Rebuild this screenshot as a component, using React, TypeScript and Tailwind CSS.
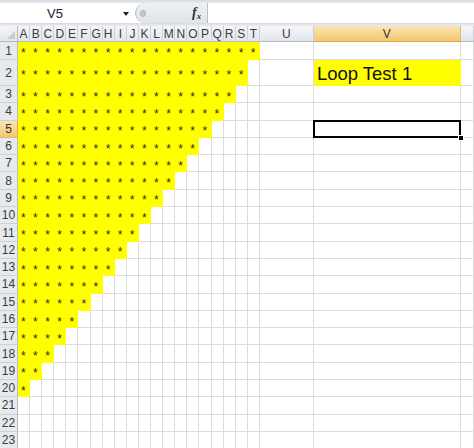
import React from "react";

const COLS = "ABCDEFGHIJKLMNOPQRST".split("");

function HeaderCell({ label, selected }: { label: string; selected?: boolean }) {
  return (
    <div
      className={
        selected
          ? "flex items-center justify-center border-r border-b border-r-[#e8b96a] border-b-[#e3a54b] bg-gradient-to-b from-[#fbe4b4] to-[#f4c76e] text-[12px] leading-none text-[#333]"
          : "flex items-center justify-center border-r border-b border-r-[#cdd1d7] border-b-[#b4bac2] bg-gradient-to-b from-[#f4f6f9] to-[#e2e6eb] text-[12px] leading-none text-[#3c3c3c]"
      }
    >
      {label}
    </div>
  );
}

function RowHeader({ n, selected }: { n: number; selected?: boolean }) {
  return (
    <div
      className={
        selected
          ? "flex items-center justify-center border-r border-b border-r-[#e3a54b] border-b-[#e8b96a] bg-gradient-to-b from-[#fbe4b4] to-[#f4c76e] text-[12px] leading-none text-[#333]"
          : "flex items-center justify-center border-r border-b border-r-[#b4bac2] border-b-[#cdd1d7] bg-[#e6e9ee] text-[12px] leading-none text-[#3c3c3c]"
      }
    >
      {n}
    </div>
  );
}

export default function App() {
  const rows = Array.from({ length: 23 }, (_, i) => i + 1);
  return (
    <div
      className="w-[474px] h-[448px] overflow-hidden bg-white"
      style={{ fontFamily: '"Liberation Sans", Arial, sans-serif' }}
    >
      {/* formula bar */}
      <div className="h-[26px] flex flex-col">
        <div className="h-[3px] bg-gradient-to-b from-[#d5dae1] to-[#e8ebef]" />
        <div className="flex h-[20px]">
          <div className="w-[135px] bg-white flex items-center relative">
            <span className="ml-[47px] text-[13px] text-[#222] leading-none">V5</span>
            <span className="absolute left-[123px] top-[9px] w-0 h-0 border-l-[3px] border-r-[3px] border-t-[4px] border-l-transparent border-r-transparent border-t-[#222]" />
          </div>
          <div className="w-[72px] bg-gradient-to-b from-[#eef0f3] to-[#e1e4e9] flex items-center relative rounded-l-[10px] border-l border-[#b3bac4]">
            <span className="ml-[4px] w-[6px] h-[7px] rounded-full bg-[#c3c8cf] border border-[#aeb4bc]" />
            <span
              className="absolute left-[56px] top-[3px] text-[14px] leading-none text-[#333] italic font-bold"
              style={{ fontFamily: '"Liberation Serif", "Times New Roman", serif' }}
            >
              f<sub className="text-[9px]">x</sub>
            </span>
          </div>
          <div className="flex-1 bg-white border-l border-[#b8bfc8]" />
        </div>
        <div className="h-[3px] bg-gradient-to-b from-[#d5dae0] to-[#eceef1]" />
      </div>

      {/* grid */}
      <div className="grid grid-cols-[18px_repeat(20,12.1px)_54px_147px_13px] grid-rows-[16px_18px_26px_repeat(21,17.3px)]">
        {/* header row */}
        <div className="relative border-r border-b border-r-[#b4bac2] border-b-[#b4bac2] bg-gradient-to-b from-[#f4f6f9] to-[#e2e6eb]">
          <span className="absolute right-[2px] bottom-[2px] w-0 h-0 border-b-[8px] border-l-[8px] border-b-[#c8cdd4] border-l-transparent" />
        </div>
        {COLS.map((c) => (
          <HeaderCell key={c} label={c} />
        ))}
        <HeaderCell label="U" />
        <HeaderCell label="V" selected />
        <HeaderCell label="" />

        {rows.map((r) => {
          const filled = 21 - r;
          return (
            <React.Fragment key={r}>
              <RowHeader n={r} selected={r === 5} />
              {COLS.map((c, ci) => {
                const yellow = r <= 20 && ci < filled;
                return yellow ? (
                  <div
                    key={c}
                    className="bg-[#ffff00] flex items-center pl-[3px] pt-[4px] text-[12px] leading-none text-[#2a2a10]"
                  >
                    *
                  </div>
                ) : (
                  <div key={c} className="border-r border-b border-[#dadcdd] bg-white" />
                );
              })}
              <div className="border-r border-b border-[#dadcdd] bg-white" />
              {r === 2 ? (
                <div className="bg-[#ffff00] flex items-end pl-[3px] pb-[3px] text-[18.5px] leading-none text-[#111]">
                  Loop Test 1
                </div>
              ) : r === 5 ? (
                <div className="relative border-r border-b border-[#dadcdd] bg-white">
                  <div className="absolute left-[-1px] top-[-1px] right-[-1px] bottom-[-1px] border-2 border-black" />
                  <div className="absolute right-[-4px] bottom-[-4px] w-[6px] h-[6px] bg-black border border-white" />
                </div>
              ) : (
                <div className="border-r border-b border-[#dadcdd] bg-white" />
              )}
              <div className="border-r border-b border-[#dadcdd] bg-white" />
            </React.Fragment>
          );
        })}
      </div>
    </div>
  );
}
